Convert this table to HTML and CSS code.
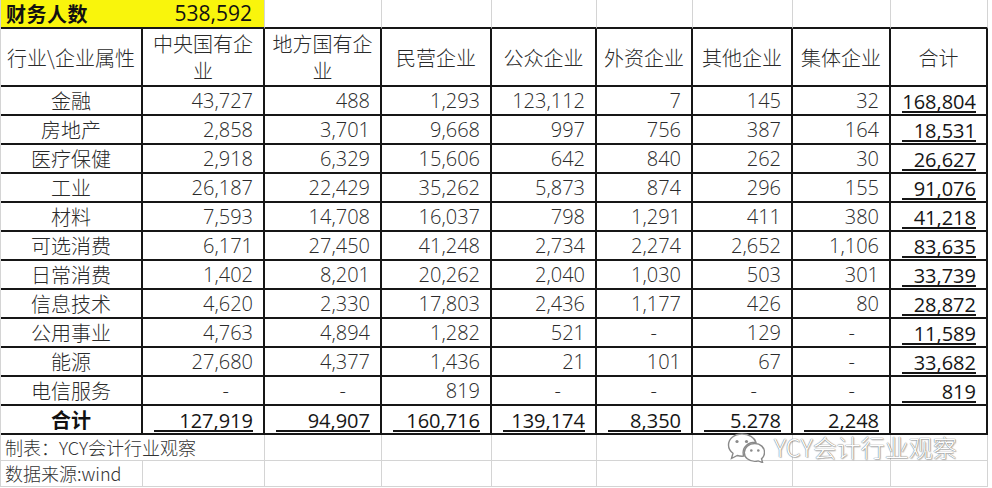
FILE: index.html
```html
<!DOCTYPE html>
<html lang="zh-CN">
<head>
<meta charset="utf-8">
<link rel="stylesheet" href="styles.css">
</head>
<body>
<div class="sheet">
  <div class="cell ytitle"><span class="ylab">财务人数</span><span class="ynum">538,592</span></div>
  <div class="cell top"></div><div class="cell top"></div><div class="cell top"></div><div class="cell top"></div><div class="cell top"></div><div class="cell top"></div><div class="cell top"></div>

  <div class="cell h first">行业\企业属性</div>
  <div class="cell h">中央国有企业</div>
  <div class="cell h">地方国有企业</div>
  <div class="cell h">民营企业</div>
  <div class="cell h">公众企业</div>
  <div class="cell h">外资企业</div>
  <div class="cell h">其他企业</div>
  <div class="cell h">集体企业</div>
  <div class="cell h">合计</div>

  <div class="cell c">金融</div><div class="cell n">43,727</div><div class="cell n">488</div><div class="cell n">1,293</div><div class="cell n">123,112</div><div class="cell n">7</div><div class="cell n">145</div><div class="cell n">32</div><div class="cell s"><span class="u">168,804</span></div>
  <div class="cell c">房地产</div><div class="cell n">2,858</div><div class="cell n">3,701</div><div class="cell n">9,668</div><div class="cell n">997</div><div class="cell n">756</div><div class="cell n">387</div><div class="cell n">164</div><div class="cell s"><span class="u">18,531</span></div>
  <div class="cell c">医疗保健</div><div class="cell n">2,918</div><div class="cell n">6,329</div><div class="cell n">15,606</div><div class="cell n">642</div><div class="cell n">840</div><div class="cell n">262</div><div class="cell n">30</div><div class="cell s"><span class="u">26,627</span></div>
  <div class="cell c">工业</div><div class="cell n">26,187</div><div class="cell n">22,429</div><div class="cell n">35,262</div><div class="cell n">5,873</div><div class="cell n">874</div><div class="cell n">296</div><div class="cell n">155</div><div class="cell s"><span class="u">91,076</span></div>
  <div class="cell c">材料</div><div class="cell n">7,593</div><div class="cell n">14,708</div><div class="cell n">16,037</div><div class="cell n">798</div><div class="cell n">1,291</div><div class="cell n">411</div><div class="cell n">380</div><div class="cell s"><span class="u">41,218</span></div>
  <div class="cell c">可选消费</div><div class="cell n">6,171</div><div class="cell n">27,450</div><div class="cell n">41,248</div><div class="cell n">2,734</div><div class="cell n">2,274</div><div class="cell n">2,652</div><div class="cell n">1,106</div><div class="cell s"><span class="u">83,635</span></div>
  <div class="cell c">日常消费</div><div class="cell n">1,402</div><div class="cell n">8,201</div><div class="cell n">20,262</div><div class="cell n">2,040</div><div class="cell n">1,030</div><div class="cell n">503</div><div class="cell n">301</div><div class="cell s"><span class="u">33,739</span></div>
  <div class="cell c">信息技术</div><div class="cell n">4,620</div><div class="cell n">2,330</div><div class="cell n">17,803</div><div class="cell n">2,436</div><div class="cell n">1,177</div><div class="cell n">426</div><div class="cell n">80</div><div class="cell s"><span class="u">28,872</span></div>
  <div class="cell c">公用事业</div><div class="cell n">4,763</div><div class="cell n">4,894</div><div class="cell n">1,282</div><div class="cell n">521</div><div class="cell n d">-</div><div class="cell n">129</div><div class="cell n d">-</div><div class="cell s"><span class="u">11,589</span></div>
  <div class="cell c">能源</div><div class="cell n">27,680</div><div class="cell n">4,377</div><div class="cell n">1,436</div><div class="cell n">21</div><div class="cell n">101</div><div class="cell n">67</div><div class="cell n d">-</div><div class="cell s"><span class="u">33,682</span></div>
  <div class="cell c">电信服务</div><div class="cell n d">-</div><div class="cell n d">-</div><div class="cell n">819</div><div class="cell n d">-</div><div class="cell n d">-</div><div class="cell n d">-</div><div class="cell n d">-</div><div class="cell s"><span class="u">819</span></div>

  <div class="cell c tot">合计</div>
  <div class="cell s"><span class="u">127,919</span></div>
  <div class="cell s"><span class="u">94,907</span></div>
  <div class="cell s"><span class="u">160,716</span></div>
  <div class="cell s"><span class="u">139,174</span></div>
  <div class="cell s"><span class="u">8,350</span></div>
  <div class="cell s"><span class="u">5.278</span></div>
  <div class="cell s"><span class="u">2,248</span></div>
  <div class="cell s"></div>

  <div class="cell g note wide">制表：YCY会计行业观察</div>
  <div class="cell g"></div><div class="cell g"></div><div class="cell g"></div><div class="cell g"></div><div class="cell g"></div><div class="cell g"></div><div class="cell g"></div><div class="cell g"></div>

  <div class="cell g note">数据来源:wind</div>
  <div class="cell g"></div><div class="cell g"></div><div class="cell g"></div><div class="cell g"></div><div class="cell g"></div><div class="cell g"></div><div class="cell g"></div><div class="cell g"></div>

  <div class="wm">
    <svg class="wm-icon" width="38" height="32" viewBox="0 0 38 32">
      <path d="M15 3 C7 3 1.5 8 1.5 14 C1.5 17.5 3.3 20.3 6 22.3 L4.5 27.5 L10.3 24.5 C11.8 25 13.4 25.2 15 25.2 C15.6 25.2 16.2 25.2 16.8 25.1 C16.3 24 16.1 22.8 16.1 21.6 C16.1 15.8 21.3 11.3 27.8 11.3 C28.2 11.3 28.5 11.3 28.9 11.3 C27.5 6.5 21.8 3 15 3 Z" fill="#fff" stroke="#8a8a8a" stroke-width="1.4"/>
      <circle cx="10" cy="10.5" r="1.6" fill="#8a8a8a"/>
      <circle cx="19.5" cy="10.5" r="1.6" fill="#8a8a8a"/>
      <path d="M27.8 12.5 C21.8 12.5 17.3 16.5 17.3 21.5 C17.3 26.5 21.8 30.4 27.8 30.4 C29 30.4 30.2 30.2 31.3 29.9 L35.6 31.6 L34.5 27.8 C36.4 26.2 37.5 24 37.5 21.5 C37.5 16.5 33.5 12.5 27.8 12.5 Z" fill="#fff" stroke="#8a8a8a" stroke-width="1.4"/>
      <circle cx="24.3" cy="19.5" r="1.3" fill="#8a8a8a"/>
      <circle cx="31.3" cy="19.5" r="1.3" fill="#8a8a8a"/>
    </svg>
    <span class="wm-text">YCY会计行业观察</span>
  </div>
</div>
</body>
</html>
```

FILE: styles.css
```css
html, body {
  margin: 0;
  padding: 0;
  background: #ffffff;
}

body {
  width: 992px;
  height: 488px;
  overflow: hidden;
  font-family: "Open Sans", "Noto Sans CJK SC", sans-serif;
  font-weight: 300;
  color: #2a2a2a;
}

.sheet {
  position: relative;
  display: grid;
  grid-template-columns: 142px 122px 117px 110px 105px 96px 100px 98px 97px;
  grid-template-rows: 29px 58px repeat(12, 29px) 26px 26px;
  border-left: 1px solid #d4d4d4;
  width: 988px;
}

.cell {
  box-sizing: border-box;
  display: flex;
  align-items: center;
  font-size: 20px;
  line-height: 27px;
  border-right: 2px solid #161616;
  border-bottom: 2px solid #161616;
  min-width: 0;
}

.ytitle {
  grid-column: span 2;
  background: #f9f50c;
  border-right: 1px solid #d4d4d4;
  justify-content: space-between;
  padding: 0 12px 0 5px;
  color: #111;
}

.ylab {
  font-family: "Noto Sans CJK SC", sans-serif;
  font-weight: 700;
  letter-spacing: 0.5px;
}

.ynum {
  font-weight: 400;
  font-size: 21px;
}

.top {
  border-right: 1px solid #d4d4d4;
}

.h {
  justify-content: center;
  text-align: center;
  padding: 0 3px;
  font-family: "Noto Sans CJK SC", sans-serif;
  font-weight: 300;
  line-height: 27px;
}

.h.first {
  padding: 0;
  white-space: nowrap;
}

.c {
  justify-content: center;
  font-family: "Noto Sans CJK SC", sans-serif;
  font-weight: 300;
}

.tot {
  font-weight: 700;
  color: #111;
}

.n {
  justify-content: flex-end;
  padding-right: 10px;
}

.n.d {
  padding-right: 34px;
}

.s {
  padding: 0 10px 0 11px;
}

.u {
  flex: 1;
  display: block;
  text-align: right;
  line-height: 19px;
  border-bottom: 2px solid #161616;
  margin-top: 3px;
  color: #161616;
  font-weight: 400;
}

.g {
  border-right: 1px solid #d4d4d4;
  border-bottom: 1px solid #d4d4d4;
}

.note {
  font-family: "Noto Sans CJK SC", sans-serif;
  font-weight: 300;
  font-size: 18px;
  padding-left: 4px;
  white-space: nowrap;
  overflow: visible;
  color: #333;
}

.note.wide {
  border-right: none;
}

.wm {
  position: absolute;
  left: 726px;
  top: 431px;
  display: flex;
  align-items: center;
  gap: 9px;
}

.wm-icon {
  display: block;
}

.wm-text {
  font-family: "Noto Sans CJK SC", sans-serif;
  font-weight: 300;
  font-size: 24px;
  line-height: 28px;
  color: #ffffff;
  text-shadow: 0 0 1px #7a7a7a, 0 0 1px #7a7a7a, 1px 1px 1px rgba(0,0,0,0.25);
}
```
